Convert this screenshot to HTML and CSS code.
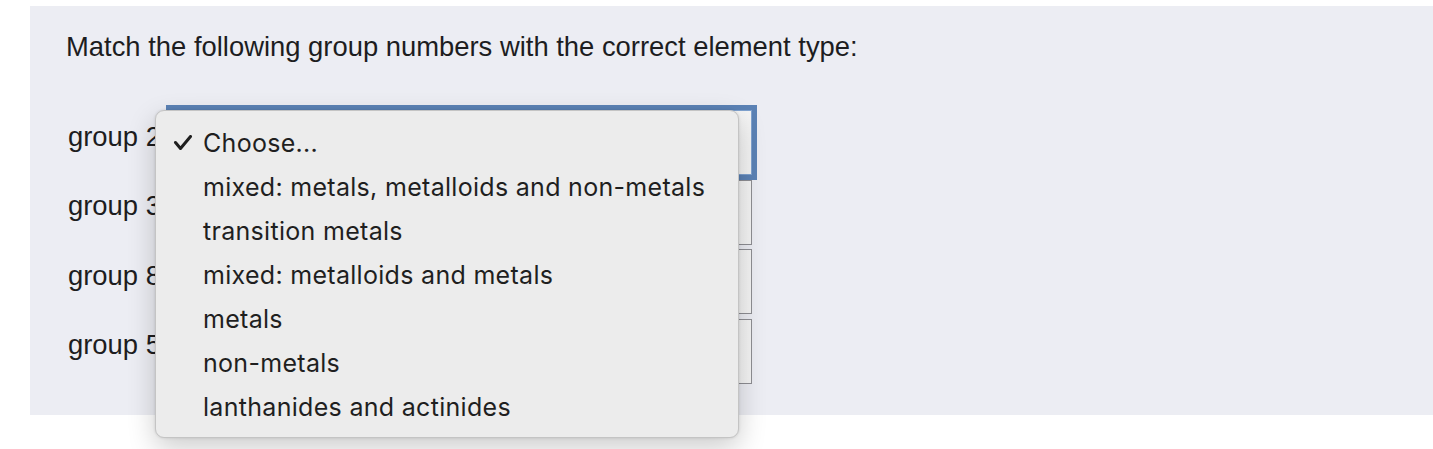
FILE: index.html
```html
<!DOCTYPE html>
<html lang="en">
  <head>
    <meta charset="UTF-8" />
    <title>Match group numbers</title>
    <link rel="stylesheet" href="styles.css">
  </head>
  <body>
    <div class="question">
      <p class="prompt">Match the following group numbers with the correct element type:</p>

      <div class="matches">
        <div class="match-row">
          <span class="group-label">group 2</span>
          <div class="select focused">
            <ul class="select-menu">
              <li class="selected">
                <svg class="check" width="20" height="16" viewBox="0 0 20 16">
                  <path d="M2.5 7.5 L7.5 13.5 L17.5 1.5" fill="none" stroke="#1f1f1f" stroke-width="3" stroke-linecap="round" stroke-linejoin="round" />
                </svg>
                Choose...
              </li>
              <li>mixed: metals, metalloids and non-metals</li>
              <li>transition metals</li>
              <li>mixed: metalloids and metals</li>
              <li>metals</li>
              <li>non-metals</li>
              <li>lanthanides and actinides</li>
            </ul>
          </div>
        </div>
        <div class="match-row">
          <span class="group-label">group 3</span>
          <div class="select"></div>
        </div>
        <div class="match-row">
          <span class="group-label">group 8</span>
          <div class="select"></div>
        </div>
        <div class="match-row">
          <span class="group-label">group 5</span>
          <div class="select"></div>
        </div>
      </div>
    </div>
  </body>
</html>
```

FILE: styles.css
```css
* {
  box-sizing: border-box;
  margin: 0;
  padding: 0;
}

html,
body {
  min-height: 449px;
}

body {
  background-color: #ffffff;
  font-family: "Liberation Sans", Arial, sans-serif;
  color: #1d1d1f;
  padding-top: 6px;
}

.question {
  margin-left: 30px;
  height: 409px;
  background-color: #ecedf3;
  padding: 25px 0 0 36px;
}

.prompt {
  font-size: 27.4px;
  line-height: 32px;
  margin-bottom: 47px;
}

.matches {
  display: grid;
  grid-template-columns: 105px 581px;
  grid-auto-rows: 65px;
  row-gap: 4.5px;
}

.match-row {
  display: contents;
}

.group-label {
  font-size: 27.4px;
  line-height: 32px;
  padding: 10.5px 0 0 2px;
  white-space: nowrap;
  overflow: hidden;
}

.select {
  position: relative;
  border: 1px solid #8e8e93;
  background: linear-gradient(to right, #f7f7f7, #ffffff 60%, #f4f4f4);
}

.select.focused {
  border-color: #7fa2cf;
  box-shadow: 0 0 0 5px #5b82b5;
  z-index: 5;
}

.select-menu {
  position: absolute;
  left: -17px;
  top: -1px;
  width: 584px;
  height: 328px;
  list-style: none;
  padding: 10px 0 0 0;
  background-color: #ececec;
  border: 1px solid #c4c4c4;
  border-radius: 9px;
  box-shadow: 0 10px 28px rgba(0, 0, 0, 0.2), 0 0 3px rgba(0, 0, 0, 0.12);
  font-family: Inter, "Noto Sans", sans-serif;
  font-size: 25px;
  letter-spacing: 0.3px;
  color: #1f1f1f;
}

.select-menu li {
  position: relative;
  height: 44px;
  line-height: 44px;
  padding-left: 47px;
}

.check {
  position: absolute;
  left: 17px;
  top: 14px;
}
```
